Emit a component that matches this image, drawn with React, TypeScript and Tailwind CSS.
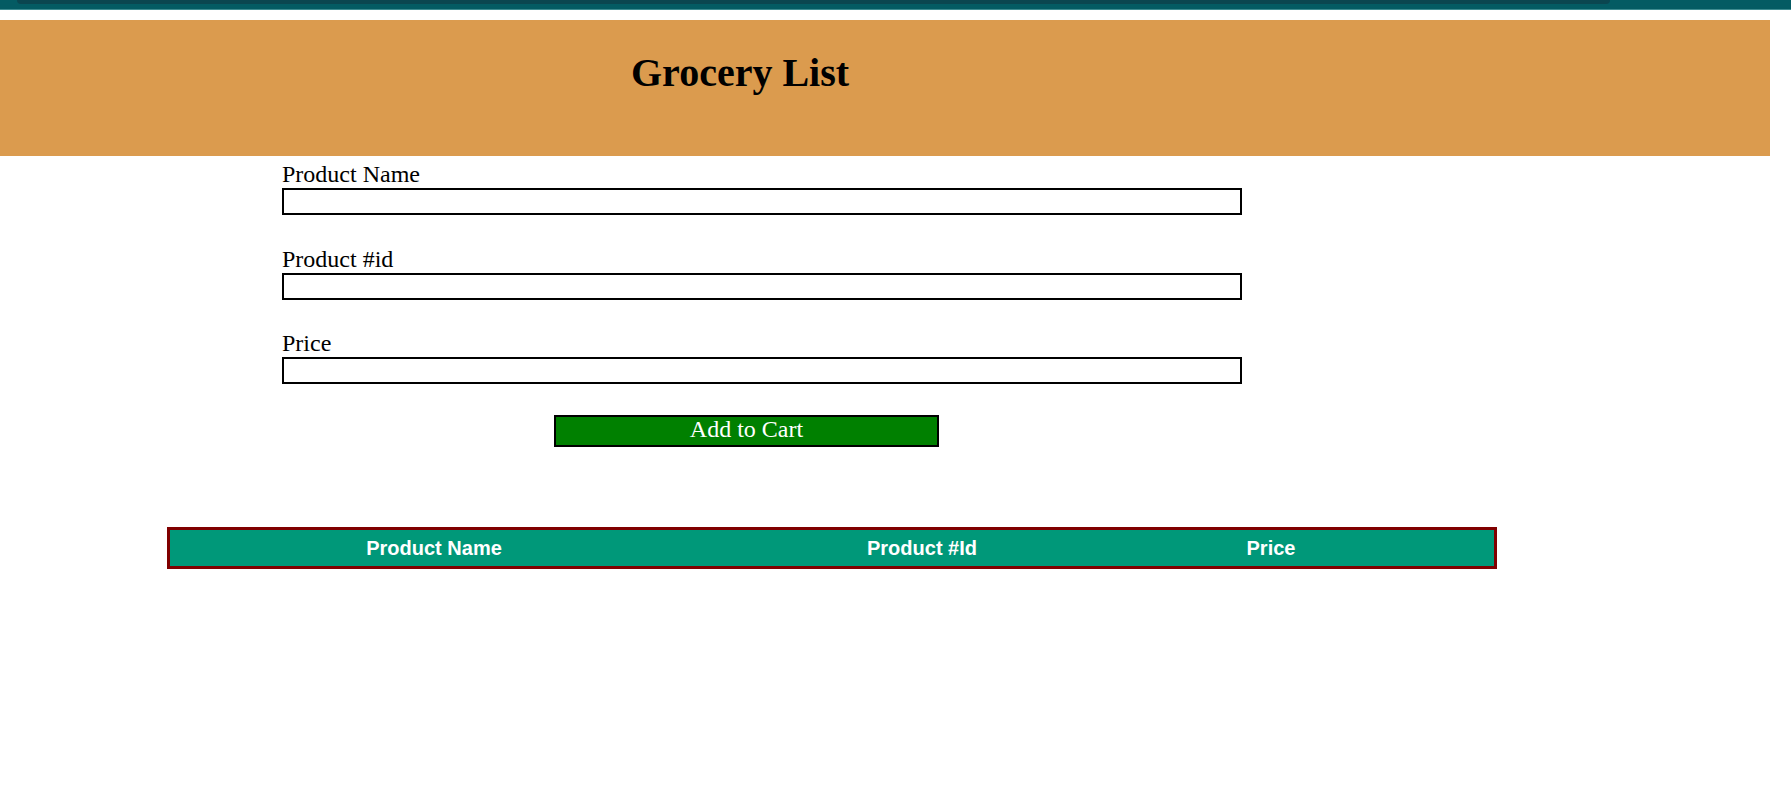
import { useState } from 'react';

type Item = { name: string; id: string; price: string };

function Field({
  label,
  value,
  onChange,
  first = false,
}: {
  label: string;
  value: string;
  onChange: (v: string) => void;
  first?: boolean;
}) {
  return (
    <label className={`block ${first ? 'mt-[4px]' : 'mt-[29.5px]'}`}>
      <span className="block h-[28px] leading-[28px] text-[24px] text-black">{label}</span>
      <input
        value={value}
        onChange={(e) => onChange(e.target.value)}
        className="block w-[960px] h-[27px] border-2 border-black bg-white px-1 text-[18px] outline-none"
      />
    </label>
  );
}

export default function App() {
  const [name, setName] = useState('');
  const [id, setId] = useState('');
  const [price, setPrice] = useState('');
  const [items, setItems] = useState<Item[]>([]);

  const add = () => {
    if (!name && !id && !price) return;
    setItems([...items, { name, id, price }]);
    setName('');
    setId('');
    setPrice('');
  };

  return (
    <div className="min-h-screen w-full bg-white font-['Liberation_Serif',serif]">
      {/* top strip */}
      <div className="h-[9px] bg-[#045b63]">
        <div className="ml-[17px] w-[1593px] h-[4px] rounded-b-[6px] bg-[#0b4650]" />
      </div>
      <div className="h-px bg-[#3f8c91]" />

      <header className="mt-[10px] w-[1770px] h-[136px] bg-[#db9b4e] pt-[30px] pl-[631px]">
        <h1 className="text-[40px] leading-[46px] font-bold text-black">Grocery List</h1>
      </header>

      <div className="ml-[282px] w-[960px]">
        <Field label="Product Name" value={name} onChange={setName} first />
        <Field label="Product #id" value={id} onChange={setId} />
        <Field label="Price" value={price} onChange={setPrice} />
        <button
          onClick={add}
          className="mt-[31px] ml-[272px] block w-[385px] h-[32px] pb-[4px] border-2 border-black bg-[#008000] text-white text-[24px] leading-[24px]"
        >
          Add to Cart
        </button>
      </div>

      <div className="mt-[80px] ml-[167px] w-[1330px] border-[3px] border-[#800000]">
        <table className="w-full table-fixed font-['Liberation_Sans',Arial,sans-serif]">
          <thead>
            <tr className="h-[36px] bg-[#009879] text-white text-[20px] font-bold">
              <th className="w-[528px] text-center">Product Name</th>
              <th className="w-[448px] text-center">Product #Id</th>
              <th className="w-[250px] text-center">Price</th>
              <th className="w-[98px]"></th>
            </tr>
          </thead>
          <tbody>
            {items.map((it, i) => (
              <tr key={i} className="h-[36px] text-[18px]">
                <td className="text-center">{it.name}</td>
                <td className="text-center">{it.id}</td>
                <td className="text-center">{it.price}</td>
                <td></td>
              </tr>
            ))}
          </tbody>
        </table>
      </div>
    </div>
  );
}
